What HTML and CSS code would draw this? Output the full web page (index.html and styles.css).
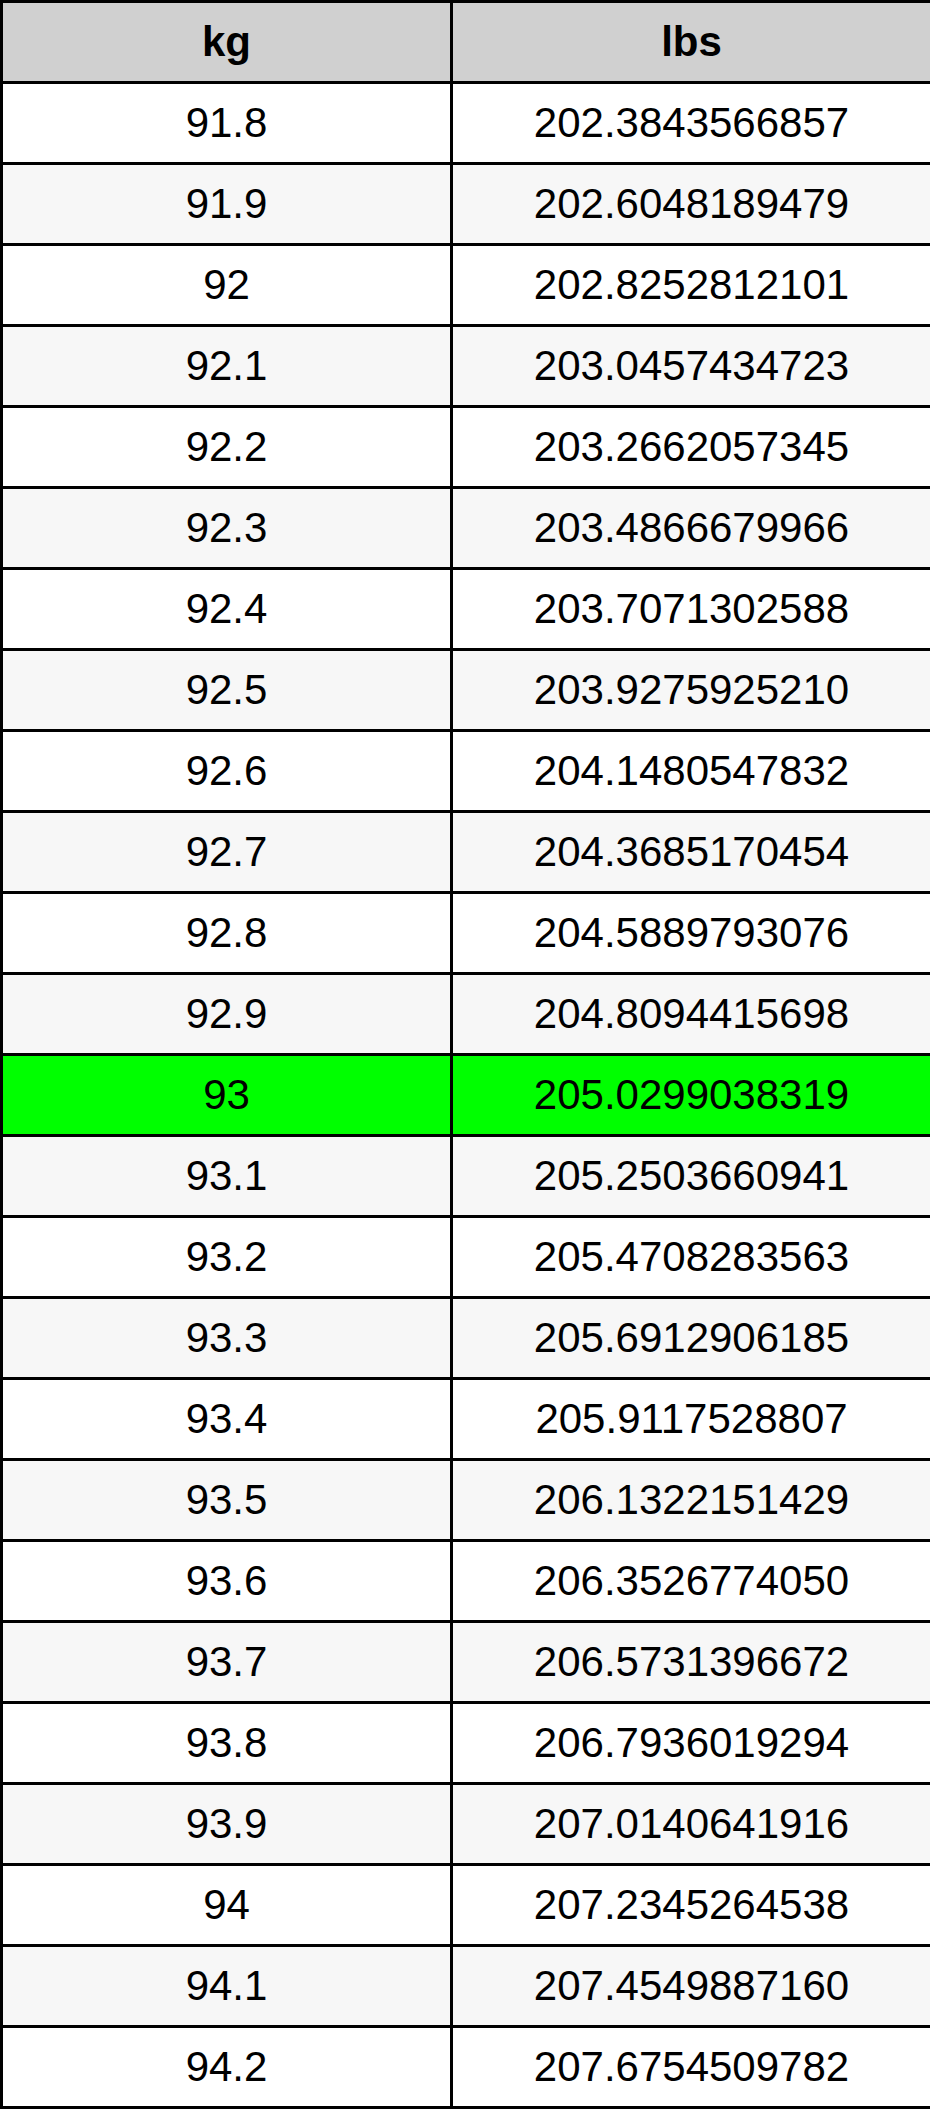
FILE: index.html
```html
<!DOCTYPE html>
<html>
<head>
<meta charset="utf-8">
<link rel="stylesheet" href="styles.css">
</head>
<body>
<table class="conv">
<thead>
<tr><th class="c1">kg</th><th class="c2">lbs</th></tr>
</thead>
<tbody>
<tr><td>91.8</td><td>202.3843566857</td></tr>
<tr class="alt"><td>91.9</td><td>202.6048189479</td></tr>
<tr><td>92</td><td>202.8252812101</td></tr>
<tr class="alt"><td>92.1</td><td>203.0457434723</td></tr>
<tr><td>92.2</td><td>203.2662057345</td></tr>
<tr class="alt"><td>92.3</td><td>203.4866679966</td></tr>
<tr><td>92.4</td><td>203.7071302588</td></tr>
<tr class="alt"><td>92.5</td><td>203.9275925210</td></tr>
<tr><td>92.6</td><td>204.1480547832</td></tr>
<tr class="alt"><td>92.7</td><td>204.3685170454</td></tr>
<tr><td>92.8</td><td>204.5889793076</td></tr>
<tr class="alt"><td>92.9</td><td>204.8094415698</td></tr>
<tr class="hl"><td>93</td><td>205.0299038319</td></tr>
<tr class="alt"><td>93.1</td><td>205.2503660941</td></tr>
<tr><td>93.2</td><td>205.4708283563</td></tr>
<tr class="alt"><td>93.3</td><td>205.6912906185</td></tr>
<tr><td>93.4</td><td>205.9117528807</td></tr>
<tr class="alt"><td>93.5</td><td>206.1322151429</td></tr>
<tr><td>93.6</td><td>206.3526774050</td></tr>
<tr class="alt"><td>93.7</td><td>206.5731396672</td></tr>
<tr><td>93.8</td><td>206.7936019294</td></tr>
<tr class="alt"><td>93.9</td><td>207.0140641916</td></tr>
<tr><td>94</td><td>207.2345264538</td></tr>
<tr class="alt"><td>94.1</td><td>207.4549887160</td></tr>
<tr><td>94.2</td><td>207.6754509782</td></tr>
</tbody>
</table>
</body>
</html>
```
FILE: styles.css
```css
html, body {
  margin: 0;
  padding: 0;
  background: #ffffff;
}
.conv {
  border-collapse: collapse;
  width: 930px;
  table-layout: fixed;
  font-family: "Liberation Sans", Arial, sans-serif;
  font-size: 42px;
  color: #000;
}
.conv th, .conv td {
  border: 3px solid #000;
  padding: 0;
  height: 81px;
  text-align: center;
  vertical-align: middle;
  box-sizing: border-box;
}
.conv th {
  background: #d0d0d0;
  font-weight: bold;
}
.conv .c1 { width: 450px; }
.conv .c2 { width: 480px; }
.conv td { background: #ffffff; }
.conv tr.alt td { background: #f7f7f7; }
.conv tr.hl td { background: #00ff00; }
```
